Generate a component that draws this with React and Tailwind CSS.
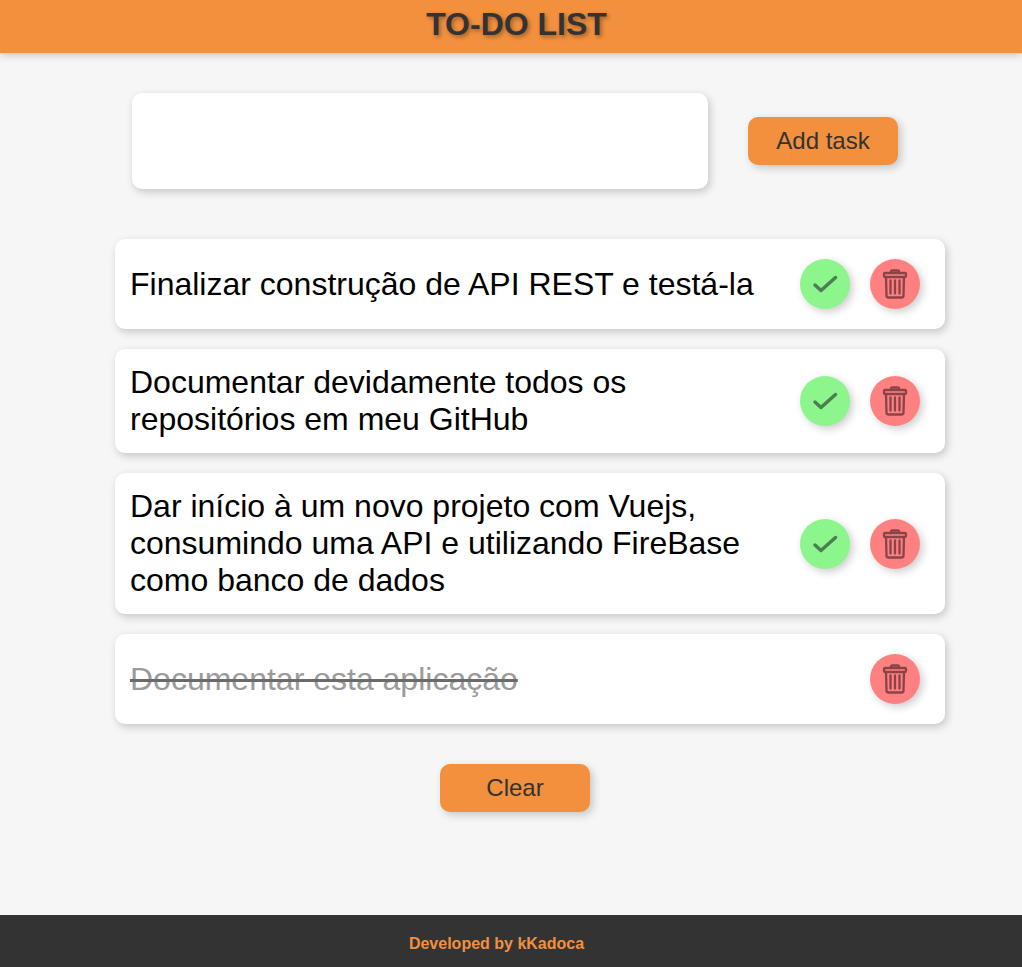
function Check() {
  return (
    <svg width="26" height="26" viewBox="0 0 26 26" fill="none" stroke="#4b7f52" strokeWidth="3.5" strokeLinecap="round" strokeLinejoin="round">
      <path d="M3 14 L9 19.5 L23.5 6.5" />
    </svg>
  );
}

function Trash() {
  return (
    <svg width="26" height="30" viewBox="0 0 26 30" fill="none" stroke="#8a4346" strokeWidth="2.3" strokeLinecap="round" strokeLinejoin="round">
      <path d="M9 4 V2.5 A1 1 0 0 1 10 1.5 H16 A1 1 0 0 1 17 2.5 V4" />
      <rect x="2" y="4" width="22" height="4" rx="1" />
      <path d="M4 8 L4.5 26.5 A2 2 0 0 0 6.5 28.5 H19.5 A2 2 0 0 0 21.5 26.5 L22 8" />
      <path d="M8.5 11.5 V24.5 M13 11.5 V24.5 M17.5 11.5 V24.5" />
    </svg>
  );
}

function Round({ color, children }) {
  return (
    <button className={`flex h-[50px] w-[50px] shrink-0 items-center justify-center rounded-full ${color} shadow-[3px_3px_8px_rgba(0,0,0,0.2)]`}>
      {children}
    </button>
  );
}

function Card({ children, done }) {
  return (
    <li className="flex items-center justify-between rounded-[10px] bg-white py-[15px] pl-[15px] pr-[25px] shadow-[2px_3px_8px_rgba(0,0,0,0.2)]">
      <p className={done ? "w-[650px] text-[32px] leading-[37px] text-[#9b9b9b] line-through decoration-[#6b6b6b]" : "w-[650px] text-[32px] leading-[37px] text-black"}>
        {children}
      </p>
      <div className="my-[5px] flex gap-5">
        {!done && (
          <Round color="bg-[#8cf58c]">
            <Check />
          </Round>
        )}
        <Round color="bg-[#ff8080]">
          <Trash />
        </Round>
      </div>
    </li>
  );
}

export default function App() {
  return (
    <div className="flex min-h-screen flex-col bg-[#f6f6f6] font-['Liberation_Sans',Arial,sans-serif]">
      <header className="flex h-[53px] items-center justify-center bg-[#f2903e] pb-[6px] pl-[11px] shadow-[0_2px_8px_rgba(0,0,0,0.2)]">
        <h1 className="text-[32px] font-bold text-[#333333] [text-shadow:2px_2px_4px_rgba(0,0,0,0.35)]">TO-DO LIST</h1>
      </header>
      <main className="ml-[115px] w-[830px] flex-1 pt-10">
        <form className="ml-[17px] flex items-center gap-10">
          <input className="h-24 w-[576px] rounded-[10px] bg-white shadow-[2px_3px_8px_rgba(0,0,0,0.2)] outline-none" />
          <button type="button" className="h-12 w-[150px] rounded-[10px] bg-[#f2903e] text-2xl text-[#333333] shadow-[3px_3px_8px_rgba(0,0,0,0.2)]">Add task</button>
        </form>
        <ul className="mt-[50px] flex flex-col gap-5">
          <Card>Finalizar construção de API REST e testá-la</Card>
          <Card>Documentar devidamente todos os repositórios em meu GitHub</Card>
          <Card>Dar início à um novo projeto com Vuejs, consumindo uma API e utilizando FireBase como banco de dados</Card>
          <Card done>Documentar esta aplicação</Card>
        </ul>
        <button type="button" className="ml-[325px] mt-10 h-12 w-[150px] rounded-[10px] bg-[#f2903e] text-2xl text-[#333333] shadow-[3px_3px_8px_rgba(0,0,0,0.2)]">Clear</button>
      </main>
      <footer className="flex h-[52px] items-center justify-center bg-[#333333] pr-[29px] pt-[6px]">
        <p className="text-base font-bold text-[#f2903e]">Developed by kKadoca</p>
      </footer>
    </div>
  );
}
